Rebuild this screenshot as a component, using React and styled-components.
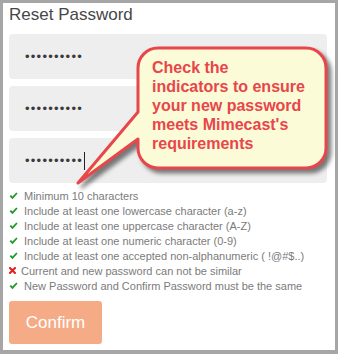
import React from 'react'
import styled, { createGlobalStyle } from 'styled-components';

const rules = [
  { ok: true, text: 'Minimum 10 characters' },
  { ok: true, text: 'Include at least one lowercase character (a-z)' },
  { ok: true, text: 'Include at least one uppercase character (A-Z)' },
  { ok: true, text: 'Include at least one numeric character (0-9)' },
  { ok: true, text: 'Include at least one accepted non-alphanumeric ( !@#$..)' },
  { ok: false, text: 'Current and new password can not be similar' },
  { ok: true, text: 'New Password and Confirm Password must be the same' },
];

const CheckIcon = () => (
  <svg width="9" height="8" viewBox="0 0 9 8">
    <path d="M0.6 4.2 L2 2.9 L3.5 4.5 L7.3 0.4 L8.6 1.6 L3.5 7.2 Z" fill="#23992a" />
  </svg>
);

const CrossIcon = () => (
  <svg width="7" height="7" viewBox="0 0 7 7">
    <path d="M1 1 L6 6 M6 1 L1 6" stroke="#e3201b" strokeWidth="2" strokeLinecap="square" />
  </svg>
);

const App = () => {
  return (
    <>
      <GlobalStyle />
      <Frame>
        <Title>Reset Password</Title>
        <Fields>
          <Field><Dots>••••••••••</Dots></Field>
          <Field><Dots>••••••••••</Dots></Field>
          <Field><Dots>••••••••••</Dots><Caret /></Field>
        </Fields>
        <RuleList>
          {rules.map((r) => (
            <Rule key={r.text} ok={r.ok}>
              <IconBox>{r.ok ? <CheckIcon /> : <CrossIcon />}</IconBox>
              <span>{r.text}</span>
            </Rule>
          ))}
        </RuleList>
        <ConfirmButton>Confirm</ConfirmButton>

        <Callout>
          <svg width="262" height="150" viewBox="0 0 262 150">
            <path
              d="M86,6 H234 A20,20 0 0 1 254,26 V106 A20,20 0 0 1 234,126 H86 A20,20 0 0 1 66,106 V97 L6,141 L66,70 V26 A20,20 0 0 1 86,6 Z"
              fill="#fbfbd8"
              stroke="#e8464a"
              strokeWidth="3"
              strokeLinejoin="round"
            />
          </svg>
          <CalloutText>
            Check the<br />
            indicators to ensure<br />
            your new password<br />
            meets Mimecast's<br />
            requirements
          </CalloutText>
        </Callout>
      </Frame>
    </>
  )
}

const GlobalStyle = createGlobalStyle`
  body {
    margin: 0;
    background: #fff;
    font-family: "Liberation Sans", Arial, sans-serif;
  }
`;

const Frame = styled.div`
  position: relative;
  box-sizing: border-box;
  width: 338px;
  height: 354px;
  border: 3px solid #a6a6a6;
  border-bottom-width: 4px;
  padding: 2px 8px 0 6px;
  background: #fff;
`;

const Title = styled.div`
  font-size: 17px;
  line-height: 20px;
  color: #474747;
`;

const Fields = styled.div`
  margin-top: 9px;
  display: flex;
  flex-direction: column;
  gap: 7px;
`;

const Field = styled.div`
  height: 45px;
  background: #eeeeee;
  border-radius: 4px;
  display: flex;
  align-items: center;
  padding-left: 16px;
`;

const Dots = styled.span`
  font-size: 13px;
  letter-spacing: 1.25px;
  color: #3a3a3a;
`;

const Caret = styled.span`
  width: 1px;
  height: 18px;
  margin-left: 1px;
  background: #222;
`;

const RuleList = styled.ul`
  list-style: none;
  margin: 5px 0 0;
  padding: 0;
`;

const Rule = styled.li`
  display: flex;
  align-items: center;
  height: 15px;
  font-size: 11px;
  color: #7b7b7b;
  gap: ${p => (p.ok ? '6px' : '5px')};
`;

const IconBox = styled.span`
  display: flex;
  align-items: center;
`;

const ConfirmButton = styled.button`
  margin-top: 8px;
  width: 93px;
  height: 43px;
  border: none;
  border-radius: 3px;
  background: #f6ab87;
  color: #fff;
  font-family: "Liberation Sans", Arial, sans-serif;
  font-size: 17px;
  padding: 0;
`;

const Callout = styled.div`
  position: absolute;
  left: 69px;
  top: 39px;
  width: 262px;
  height: 150px;

  svg {
    display: block;
    filter: drop-shadow(4px 4px 2px rgba(0, 0, 0, 0.5));
  }
`;

const CalloutText = styled.div`
  position: absolute;
  left: 80px;
  top: 16px;
  font-size: 16px;
  font-weight: bold;
  line-height: 19px;
  color: #e8464a;
`;

export default App
